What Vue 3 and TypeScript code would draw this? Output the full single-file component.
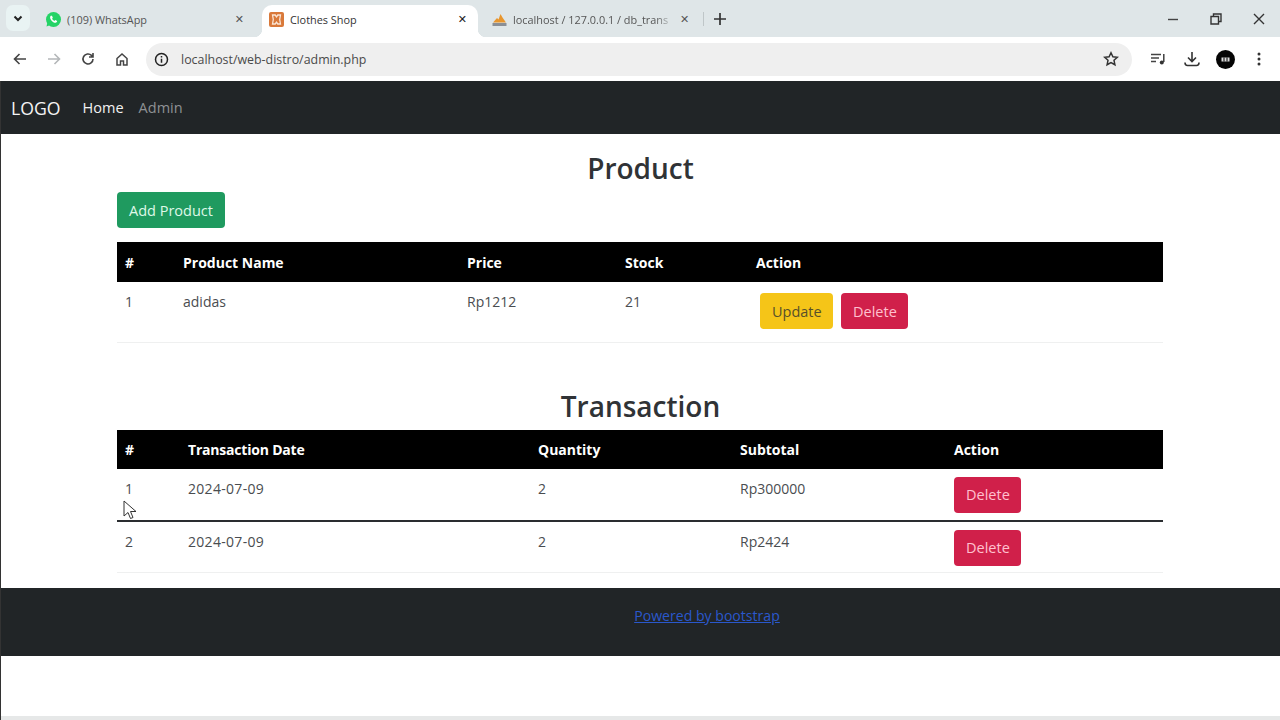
<template>
  <div class="screen">
    <div class="tabstrip">
      <div class="tab-search">
        <svg width="12" height="12" viewBox="0 0 12 12"><path d="M2.500 4.500 6 8l3.500-3.500" fill="none" stroke="#222" stroke-width="2" /></svg>
      </div>
      <div class="tab first">
        <svg class="favicon" width="17" height="17" viewBox="0 0 17 17">
          <circle cx="8.500" cy="8.500" r="7.500" fill="#25d366" />
          <path d="M1.500 15.500 2.500 11l3 3z" fill="#25d366" />
          <path d="M5.800 4.800c-1 1-1 2.600.6 4.600 1.600 1.900 3.400 2.800 4.700 2.200.8-.4 1.200-1.200 1-1.600l-1.800-1-.9.9c-.9-.3-1.800-1.200-2.300-2.200l.7-.9-.8-2c-.4-.2-1 .1-1.200 0z" fill="#fff" />
        </svg>
        <span class="tab-title">(109) WhatsApp</span>
        <span class="tab-x">✕</span>
      </div>
      <div class="tab active">
        <svg class="favicon" width="17" height="17" viewBox="0 0 17 17">
          <rect x="1" y="1" width="15" height="15" rx="2" fill="#d9793a" />
          <path d="M4.500 4h2.700l1.300 1.800L9.800 4h2.700l-.8 4.500.8 4.500H9.800l-1.300-1.800L7.200 13H4.500l.8-4.500z" fill="none" stroke="#fbe6d6" stroke-width="1.300" />
        </svg>
        <span class="tab-title">Clothes Shop</span>
        <span class="tab-x dark">✕</span>
      </div>
      <div class="tab third">
        <svg class="favicon" width="17" height="17" viewBox="0 0 17 17">
          <path d="M2 11.500 6 7l1.500 1.500L9.500 3l2 3.500 3.500 5z" fill="#e8962e" />
          <rect x="1.500" y="12" width="14" height="3" fill="#8a8f96" />
        </svg>
        <span class="tab-title fade">localhost / 127.0.0.1 / db_trans</span>
        <span class="tab-x">✕</span>
      </div>
      <span class="tab-sep"></span>
      <svg class="new-tab" width="14" height="14" viewBox="0 0 14 14"><path d="M7 1v12M1 7h12" stroke="#333" stroke-width="1.700" /></svg>
      <div class="win-btns">
        <svg width="14" height="14" viewBox="0 0 14 14"><path d="M2 7.500h10" stroke="#444" stroke-width="1.400" /></svg>
        <svg width="14" height="14" viewBox="0 0 14 14"><path d="M2 4.500h7.500V12H2zM4.500 4.500V2H12v7.500H9.500" fill="none" stroke="#333" stroke-width="1.400" /></svg>
        <svg width="14" height="14" viewBox="0 0 14 14"><path d="m2 2 10 10M12 2 2 12" stroke="#333" stroke-width="1.400" /></svg>
      </div>
    </div>

    <div class="toolbar">
      <svg class="tool" width="16" height="16" viewBox="0 0 16 16"><path d="M14 8H2.500M7.500 3 2.500 8l5 5" fill="none" stroke="#444" stroke-width="1.600" /></svg>
      <svg class="tool" width="16" height="16" viewBox="0 0 16 16"><path d="M2 8h11.500M8.500 3l5 5-5 5" fill="none" stroke="#b4b7b9" stroke-width="1.600" /></svg>
      <svg class="tool" width="16" height="16" viewBox="0 0 16 16"><path d="M13 8a5 5 0 1 1-1.500-3.600L13 6M13 2v4H9" fill="none" stroke="#444" stroke-width="1.600" /></svg>
      <svg class="tool" width="16" height="16" viewBox="0 0 16 16"><path d="M3 7.500 8 3l5 4.500V14h-3.500v-4h-3v4H3z" fill="none" stroke="#444" stroke-width="1.500" /></svg>
      <div class="omnibox">
        <svg width="15" height="15" viewBox="0 0 15 15"><circle cx="7.500" cy="7.500" r="6" fill="none" stroke="#222" stroke-width="1.500" /><path d="M7.500 6.800v4M7.500 4v1.600" stroke="#222" stroke-width="1.500" /></svg>
        <span class="url">localhost/web-distro/admin.php</span>
        <svg class="star" width="16" height="16" viewBox="0 0 16 16"><path d="m8 1.800 1.900 4 4.400.5-3.300 3 .9 4.400L8 11.500l-3.900 2.200.9-4.400-3.300-3 4.400-.5z" fill="none" stroke="#333" stroke-width="1.500" /></svg>
      </div>
      <div class="tool-right">
        <svg width="16" height="16" viewBox="0 0 16 16"><path d="M1 3.500h10M1 7h8M1 10.500h5" stroke="#444" stroke-width="1.400" /><path d="M13.800 3v8" stroke="#333" stroke-width="1.400" /><circle cx="11.800" cy="11.500" r="2" fill="#333" /></svg>
        <svg class="dl" width="16" height="16" viewBox="0 0 16 16"><path d="M8 1v9M4 6.500 8 10.500l4-4M1 11.500c0 2 1 3 2.500 3h9c1.500 0 2.500-1 2.500-3" fill="none" stroke="#333" stroke-width="1.600" /></svg>
        <svg class="avatar" width="19" height="19" viewBox="0 0 19 19"><circle cx="9.500" cy="9.500" r="9.500" fill="#050505" /><rect x="5.500" y="7.500" width="8" height="4" fill="#ddd" /><path d="M8 7.500v4M11 7.500v4" stroke="#050505" /></svg>
        <svg width="4" height="14" viewBox="0 0 4 14"><circle cx="2" cy="2" r="1.500" fill="#333" /><circle cx="2" cy="7" r="1.500" fill="#333" /><circle cx="2" cy="12" r="1.500" fill="#333" /></svg>
      </div>
    </div>

    <div class="page">
      <nav class="navbar">
        <span class="brand">LOGO</span>
        <a class="nav-link on">Home</a>
        <a class="nav-link">Admin</a>
      </nav>

      <main class="content">
        <h2 class="heading">Product</h2>
        <button class="btn green add">Add Product</button>
        <table class="tbl products">
          <thead>
            <tr>
              <th class="p1">#</th>
              <th class="p2">Product Name</th>
              <th class="p3">Price</th>
              <th class="p4">Stock</th>
              <th>Action</th>
            </tr>
          </thead>
          <tbody>
            <tr v-for="p in products" :key="p.id" class="light">
              <td>{{ p.id }}</td>
              <td>{{ p.name }}</td>
              <td>{{ p.price }}</td>
              <td>{{ p.stock }}</td>
              <td class="actions">
                <button class="btn yellow">Update</button>
                <button class="btn red">Delete</button>
              </td>
            </tr>
          </tbody>
        </table>

        <h2 class="heading second">Transaction</h2>
        <table class="tbl transactions">
          <thead>
            <tr>
              <th class="t1">#</th>
              <th class="t2">Transaction Date</th>
              <th class="t3">Quantity</th>
              <th class="t4">Subtotal</th>
              <th>Action</th>
            </tr>
          </thead>
          <tbody>
            <tr v-for="(t, i) in transactions" :key="t.id" :class="i === transactions.length - 1 ? 'light' : 'heavy'">
              <td>{{ t.id }}</td>
              <td class="date">{{ t.date }}</td>
              <td>{{ t.qty }}</td>
              <td>{{ t.subtotal }}</td>
              <td class="actions-t"><button class="btn red">Delete</button></td>
            </tr>
          </tbody>
        </table>
      </main>

      <footer class="footer"><a class="powered">Powered by bootstrap</a></footer>
      <div class="below"></div>
    </div>

    <svg class="cursor" width="14" height="20" viewBox="0 0 14 20">
      <path d="M1 1v15l4-3.500 2.500 6 2.500-1-2.500-6H13z" fill="#fff" stroke="#333" stroke-width="1" />
    </svg>
  </div>
</template>

<script setup lang="ts">
const products = [{ id: 1, name: 'adidas', price: 'Rp1212', stock: 21 }]

const transactions = [
  { id: 1, date: '2024-07-09', qty: 2, subtotal: 'Rp300000' },
  { id: 2, date: '2024-07-09', qty: 2, subtotal: 'Rp2424' }
]
</script>

<style>
body {
  margin: 0;
  overflow: hidden;
}
</style>

<style scoped>
.screen {
  position: relative;
  width: 1280px;
  height: 720px;
  overflow: hidden;
  font-family: "Open Sans", "Liberation Sans", sans-serif;
  background: #fff;
}

.tabstrip {
  height: 37px;
  background: #dfe6e8;
  display: flex;
  align-items: flex-end;
  box-sizing: border-box;
  padding-left: 6px;
}

.tab-search {
  width: 24px;
  height: 26px;
  margin-bottom: 6px;
  background: #e9f3f3;
  border-radius: 7px;
  display: flex;
  align-items: center;
  justify-content: center;
}

.tab {
  height: 32px;
  display: flex;
  align-items: center;
  box-sizing: border-box;
  font-size: 10.900px;
  color: #555;
  padding-bottom: 4px;
}

.first {
  width: 232px;
  padding-left: 15px;
  padding-right: 18px;
}

.active {
  position: relative;
  width: 216px;
  background: #fff;
  border-radius: 10px 10px 0 0;
  padding-left: 6px;
  padding-right: 11px;
  color: #333;
}

.active::before,
.active::after {
  content: "";
  position: absolute;
  bottom: 0;
  width: 8px;
  height: 8px;
}

.active::before {
  left: -8px;
  background: radial-gradient(circle at 0 0, transparent 8px, #fff 8.500px);
}

.active::after {
  right: -8px;
  background: radial-gradient(circle at 100% 0, transparent 8px, #fff 8.500px);
}

.third {
  width: 225px;
  padding-left: 13px;
}

.favicon {
  flex: none;
  margin-right: 5px;
}

.tab-title {
  flex: 1;
  white-space: nowrap;
  overflow: hidden;
}

.fade {
  flex: none;
  width: 158px;
  margin-right: 9px;
  -webkit-mask-image: linear-gradient(to right, #000 90%, rgba(0, 0, 0, 0.2));
  mask-image: linear-gradient(to right, #000 90%, rgba(0, 0, 0, 0.2));
}

.tab-x {
  font-size: 11px;
  color: #555;
  font-family: "DejaVu Sans", sans-serif;
  font-weight: 700;
}

.tab-x.dark {
  color: #222;
}

.tab-sep {
  width: 1px;
  height: 14px;
  background: #bfc6c8;
  margin: 0 0 11px 0;
}

.new-tab {
  margin: 0 0 11px 9px;
}

.win-btns {
  margin-left: auto;
  margin-right: 14px;
  margin-bottom: 11px;
  display: flex;
  gap: 29px;
}

.toolbar {
  height: 44px;
  background: #fff;
  display: flex;
  align-items: center;
  padding: 0 18px 0 12px;
  box-sizing: border-box;
}

.tool {
  margin-right: 18px;
  flex: none;
}

.omnibox {
  width: 986px;
  height: 33px;
  margin-left: -2px;
  background: #efefef;
  border-radius: 17px;
  display: flex;
  align-items: center;
  padding: 0 13px 0 8px;
  box-sizing: border-box;
}

.url {
  margin-left: 12px;
  font-size: 12.400px;
  color: #4a4a4a;
}

.star {
  margin-left: auto;
}

.tool-right {
  flex: 1;
  display: flex;
  align-items: center;
  padding-left: 18px;
}

.dl {
  margin-left: 18px;
}

.avatar {
  margin: 0 22px 0 16px;
}

.page {
  height: 639px;
  border-left: 1px solid #333;
  display: flex;
  flex-direction: column;
}

.navbar {
  height: 53px;
  flex: none;
  background: #212527;
  display: flex;
  align-items: center;
  padding-left: 10px;
  color: #fff;
}

.brand {
  font-size: 17.700px;
  margin-right: 22px;
  color: #f4f4f4;
}

.nav-link {
  font-size: 14.500px;
  margin-right: 15px;
  color: #8e9194;
}

.nav-link.on {
  color: #f2f2f2;
}

.content {
  height: 454px;
  flex: none;
  padding: 0 116px;
  box-sizing: border-box;
  color: #212529;
  display: flex;
  flex-direction: column;
  align-items: flex-start;
}

.heading {
  align-self: center;
  font-size: 28px;
  font-weight: 600;
  line-height: 34px;
  margin: 17px 0 7px;
  color: #303336;
}

.heading.second {
  margin: 46px 0 7px;
}

.btn {
  border: 0;
  border-radius: 4px;
  height: 36px;
  padding: 0 12px;
  font-family: "Open Sans", "Liberation Sans", sans-serif;
  font-size: 14.500px;
}

.green {
  width: 108px;
  background: #1f9a5f;
  color: #dff8e8;
}

.add {
  margin-bottom: 14px;
}

.yellow {
  width: 73px;
  background: #f5c518;
  color: #57502a;
}

.red {
  width: 67px;
  background: #d0204a;
  color: #ffc0cf;
}

.tbl {
  width: 1046px;
  border-collapse: collapse;
  table-layout: fixed;
  font-size: 14px;
}

.tbl th {
  background: #000;
  color: #fff;
  height: 39px;
  padding: 0 8px;
  text-align: left;
  font-weight: 700;
  font-size: 14px;
}

.products th {
  height: 40px;
}

.t2 {
  letter-spacing: -0.2px;
}

.tbl td {
  padding: 9px 8px 7px;
  vertical-align: top;
  color: #4a4d50;
  line-height: 22px;
}

.tbl td.date {
  letter-spacing: 0.3px;
}

.p1 { width: 58px; box-sizing: border-box; }
.p2 { width: 284px; box-sizing: border-box; }
.p3 { width: 158px; box-sizing: border-box; }
.p4 { width: 131px; box-sizing: border-box; }
.t1 { width: 63px; box-sizing: border-box; }
.t2 { width: 350px; box-sizing: border-box; }
.t3 { width: 202px; box-sizing: border-box; }
.t4 { width: 214px; box-sizing: border-box; }

.products tbody tr {
  height: 60px;
}

.transactions tbody tr {
  height: 52px;
}

.light td {
  border-bottom: 1px solid #eff0f0;
}

.heavy td {
  border-bottom: 2px solid #2a2d30;
}

.tbl td.actions {
  padding: 11px 8px 0 12px;
}

.actions .btn + .btn {
  margin-left: 8px;
}

.tbl td.actions-t {
  padding: 8px 8px 0;
}

.footer {
  height: 68px;
  flex: none;
  background: #212527;
  display: flex;
  justify-content: center;
  padding-top: 18px;
  padding-left: 133px;
  box-sizing: border-box;
}

.powered {
  font-size: 14.100px;
  line-height: 20px;
  color: #2a58cc;
  text-decoration: underline;
}

.below {
  flex: 1;
  border-bottom: 4px solid #e6e8e8;
}

.cursor {
  position: absolute;
  left: 123px;
  top: 500px;
}
</style>
